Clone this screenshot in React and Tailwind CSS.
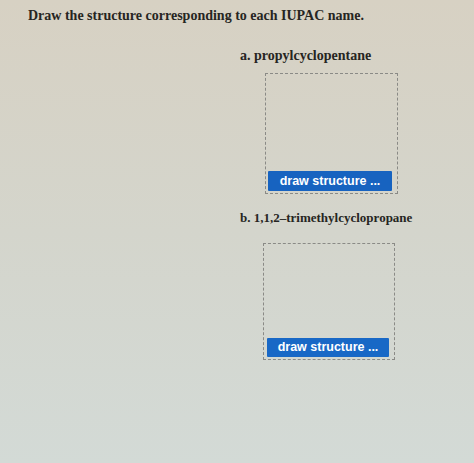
export default function App() {
  return (
    <div className="w-[474px] h-[463px] overflow-hidden bg-gradient-to-b from-[#d7d1c3] via-[#d4d5cc] to-[#d3dad6] pt-[7px] font-['Liberation_Serif',serif] text-[#262522]">
      <h1 className="pl-[28px] text-[14px] leading-[18px] font-bold">
        Draw the structure corresponding to each IUPAC name.
      </h1>

      <div className="ml-[240px] mt-[22px]">
        <p className="text-[14px] leading-[18px] font-bold">a. propylcyclopentane</p>
        <div className="ml-[25px] mt-[8px] w-[133px] h-[121px] border border-dashed border-[#8a8a86] flex flex-col justify-end p-[2px]">
          <button className="w-[124px] h-[20px] bg-[#1763c0] text-white text-[12.5px] font-['Liberation_Sans',sans-serif] font-bold rounded-[1px]">
            draw structure ...
          </button>
        </div>

        <p className="mt-[15px] text-[13px] leading-[18px] font-bold">b. 1,1,2–trimethylcyclopropane</p>
        <div className="ml-[23px] mt-[16px] w-[132px] h-[117px] border border-dashed border-[#8a8a86] flex flex-col justify-end p-[2px] pl-[3px]">
          <button className="w-[122px] h-[19px] bg-[#1868c6] text-white text-[12.5px] font-['Liberation_Sans',sans-serif] font-bold rounded-[1px]">
            draw structure ...
          </button>
        </div>
      </div>
    </div>
  );
}
